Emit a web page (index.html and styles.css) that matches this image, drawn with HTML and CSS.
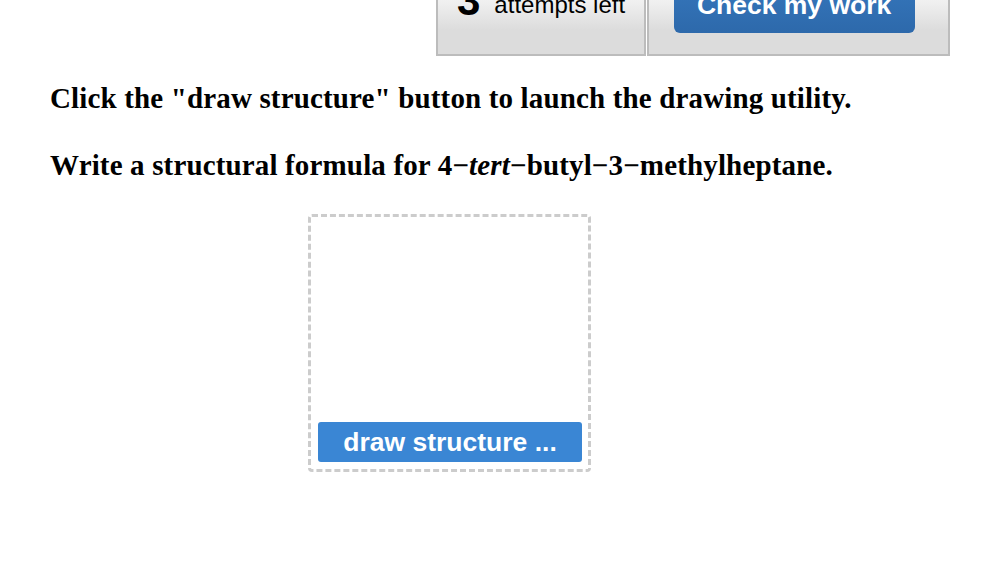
FILE: index.html
```html
<!DOCTYPE html>
<html>
<head>
<meta charset="utf-8">
<link rel="stylesheet" href="styles.css">
</head>
<body>
<div class="panel">
  <div class="cell attempts">
    <span class="num">3</span>
    <span class="label">attempts left</span>
  </div>
  <div class="cell check">
    <button class="check-btn">Check my work</button>
  </div>
</div>
<p class="q first">Click the "draw structure" button to launch the drawing utility.</p>
<p class="q second">Write a structural formula for 4&minus;<i>tert</i>&minus;butyl&minus;3&minus;methylheptane.</p>
<div class="drawbox">
  <button class="draw-btn">draw structure ...</button>
</div>
</body>
</html>
```
FILE: styles.css
```css
html, body {
  margin: 0;
  padding: 0;
  background: #ffffff;
}
body {
  width: 1008px;
  height: 570px;
  overflow: hidden;
  font-family: "Liberation Serif", "Times New Roman", serif;
}
.panel {
  display: flex;
  margin-top: -30px;
  margin-left: 436px;
  width: 514px;
}
.cell {
  box-sizing: border-box;
  height: 86px;
  border: 2px solid #bcbcbc;
  background: linear-gradient(to bottom, #fafafa 0px, #f0f0f0 30px, #dcdcdc 58px, #dcdcdc 100%);
  font-family: "Liberation Sans", Arial, sans-serif;
}
.attempts {
  width: 210px;
  display: flex;
  align-items: flex-start;
  padding-left: 19px;
}
.num {
  font-size: 42px;
  line-height: 42px;
  font-weight: bold;
  margin-top: 8px;
  color: #000;
}
.label {
  font-size: 24px;
  line-height: 24px;
  margin-top: 21px;
  margin-left: 14px;
  color: #000;
}
.check {
  width: 304px;
  border-left: 2px solid #bcbcbc;
  margin-left: 1px;
  padding-left: 25px;
  padding-top: 11px;
}
.check-btn {
  display: block;
  width: 241px;
  height: 50px;
  border: none;
  border-radius: 6px;
  background: linear-gradient(to bottom, #3576bb, #2d69ab);
  color: #fff;
  font-family: "Liberation Sans", Arial, sans-serif;
  font-weight: bold;
  font-size: 26.5px;
  line-height: 45px;
  padding: 0 0 5px 0;
  text-align: center;
}
.q {
  margin: 0;
  margin-left: 50px;
  font-size: 29px;
  letter-spacing: 0.15px;
  line-height: 33px;
  font-weight: bold;
  color: #000;
  white-space: nowrap;
}
.q.first {
  margin-top: 26px;
}
.q.second {
  margin-top: 34px;
}
.q i {
  font-style: italic;
}
.drawbox {
  box-sizing: border-box;
  margin-top: 32px;
  margin-left: 308px;
  width: 283px;
  height: 258px;
  border: 3px dashed #cccccc;
  border-radius: 4px;
  display: flex;
  flex-direction: column;
  justify-content: flex-end;
  padding: 0 6px 7px 7px;
}
.draw-btn {
  display: block;
  width: 264px;
  height: 40px;
  border: none;
  border-radius: 3px;
  background: #3a86d4;
  color: #fff;
  font-family: "Liberation Sans", Arial, sans-serif;
  font-weight: bold;
  font-size: 26.5px;
  line-height: 40px;
  padding: 0;
  text-align: center;
}
```
